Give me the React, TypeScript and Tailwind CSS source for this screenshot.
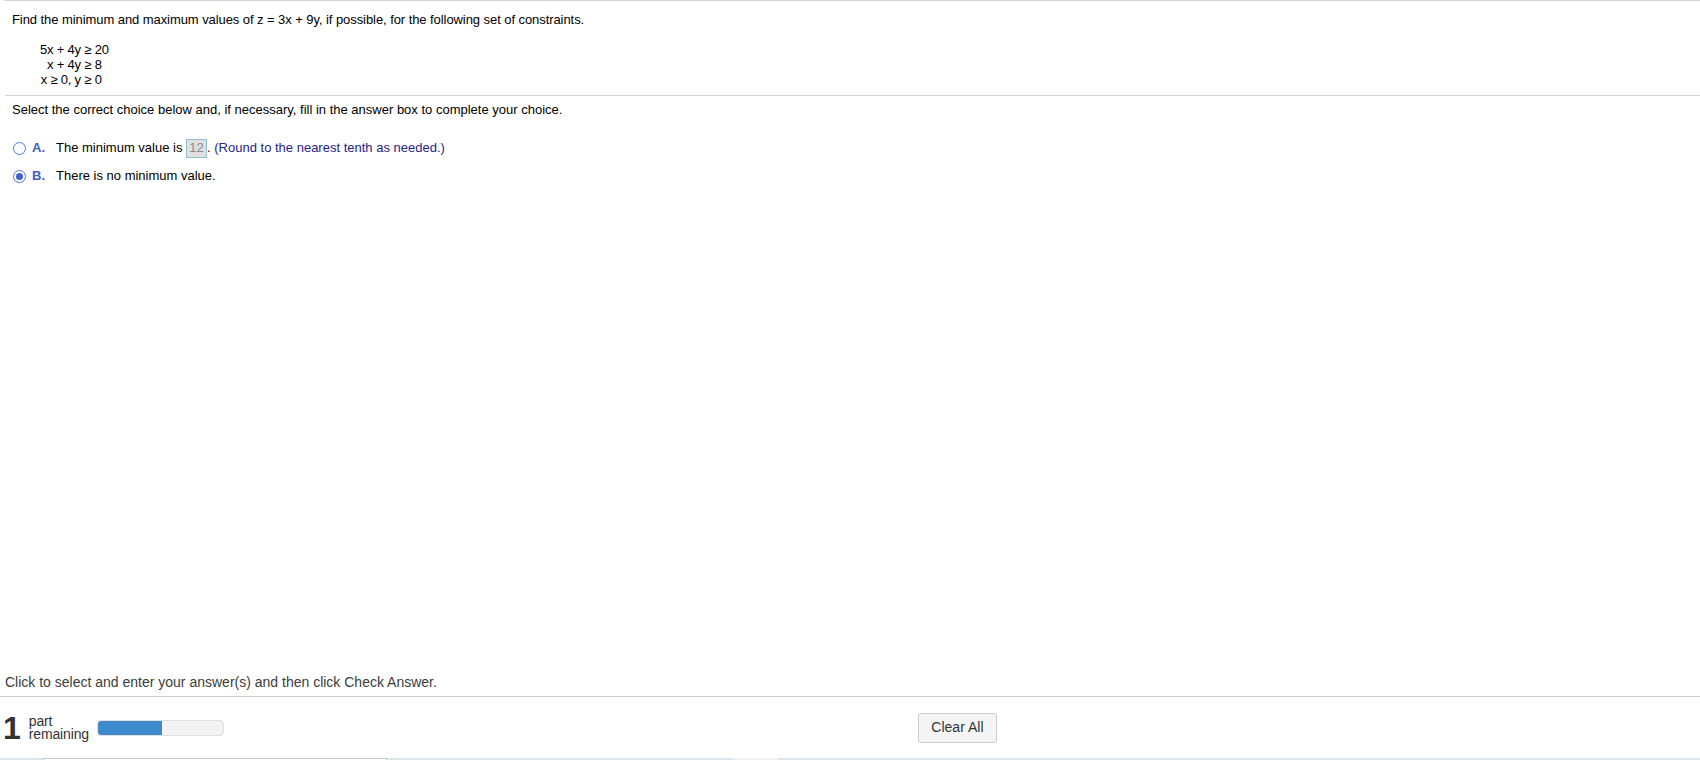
import React from "react";

function Radio({ checked }: { checked?: boolean }) {
  return (
    <span className="w-[13px] h-[13px] rounded-full border border-[#5677cf] bg-white flex items-center justify-center shrink-0">
      {checked && <span className="w-[7px] h-[7px] rounded-full bg-[#3f63cc]" />}
    </span>
  );
}

export default function App() {
  return (
    <div className="w-[1700px] h-[760px] bg-white flex flex-col font-['Liberation_Sans',Arial,sans-serif] text-[13px] text-black overflow-hidden">
      {/* question */}
      <div className="ml-[4px] border-t border-[#d3d3db] pl-[8px] pt-[11px]">
        <p className="leading-[16px] tracking-[-0.07px]">
          Find the minimum and maximum values of z = 3x + 9y, if possible, for the following set of constraints.
        </p>
        <div className="mt-[14px] ml-[28px] grid grid-cols-[auto_auto] w-max leading-[15px] tracking-[-0.2px]">
          <span className="text-right">5x + 4y&nbsp;</span>
          <span>≥ 20</span>
          <span className="text-right">x + 4y&nbsp;</span>
          <span>≥ 8</span>
          <span className="text-right">x ≥ 0, y&nbsp;</span>
          <span>≥ 0</span>
        </div>
      </div>
      <div className="ml-[5px] mt-[8px] h-px bg-[#cfd3dc]" />

      {/* choices */}
      <div className="pl-[12px] pt-[6px]">
        <p className="leading-[16px]">
          Select the correct choice below and, if necessary, fill in the answer box to complete your choice.
        </p>
        <div className="mt-[20px] flex flex-col gap-[8px]">
          <div className="flex items-center h-[20px]">
            <span className="ml-[1px]">
              <Radio />
            </span>
            <span className="ml-[6px] w-[24px] text-[#3d5ec9] font-bold">A.</span>
            <span>The minimum value is&nbsp;</span>
            <span className="w-[21px] h-[19px] bg-[#e0e0e0] border border-[#8ebfcf] text-[#8a8a8a] flex items-center justify-center">
              12
            </span>
            <span>.&nbsp;</span>
            <span className="text-[#27238c]">(Round to the nearest tenth as needed.)</span>
          </div>
          <div className="flex items-center h-[20px]">
            <span className="ml-[1px]">
              <Radio checked />
            </span>
            <span className="ml-[6px] w-[24px] text-[#3d5ec9] font-bold">B.</span>
            <span>There is no minimum value.</span>
          </div>
        </div>
      </div>

      <div className="flex-1" />

      {/* bottom */}
      <p className="pl-[5px] text-[14px] leading-[16px] text-[#3c3c3c]">
        Click to select and enter your answer(s) and then click Check Answer.
      </p>
      <div className="mt-[6px] h-px bg-[#c8cdd9]" />
      <div className="h-[61px] flex items-center">
        <span className="ml-[3px] text-[32px] leading-none font-bold text-[#333]">1</span>
        <div className="ml-[8px] flex flex-col text-[14px] leading-[13px] text-[#333] tracking-[-0.15px]">
          <span>part</span>
          <span>remaining</span>
        </div>
        <div className="ml-[8px] w-[127px] h-[16px] rounded-[4px] bg-[#f2f2f2] border border-[#e0e0e0] overflow-hidden">
          <div className="w-[64px] h-full bg-[#3e89c9]" />
        </div>
        <button
          type="button"
          className="ml-[694px] w-[79px] h-[30px] rounded-[3px] border border-[#cccccc] bg-[#f5f5f5] text-[14px] text-[#333]"
        >
          Clear All
        </button>
      </div>
      <div className="h-[2px] bg-[#dbe5ec] flex">
        <div className="ml-[43px] w-[344px] bg-white border-t border-x border-[#c6c6c6]" />
        <div className="ml-[345px] w-[46px] bg-[#eef2f5]" />
      </div>
    </div>
  );
}
